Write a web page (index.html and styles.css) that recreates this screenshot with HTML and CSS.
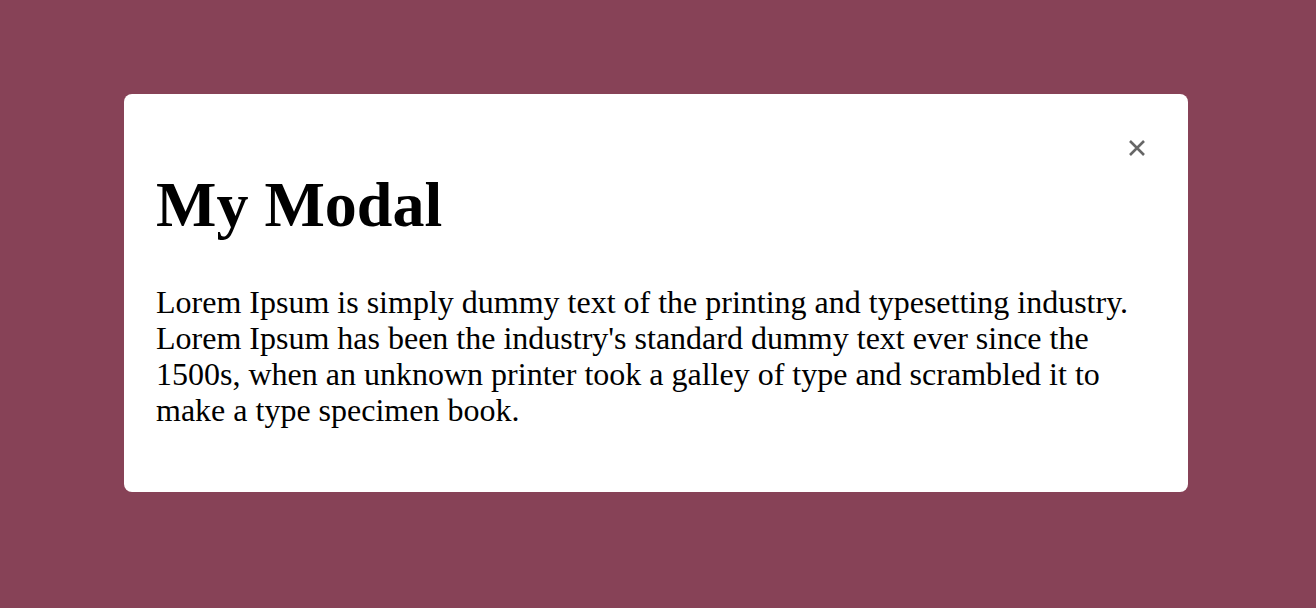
FILE: index.html
```html
<!DOCTYPE html>
<html lang="en">
<head>
    <meta charset="UTF-8">
    <title>My Modal</title>
    <link rel="stylesheet" href="styles.css">
</head>
<body>
    <div class="overlay">
        <div class="modal">
            <button class="close" aria-label="Close">
                <svg width="18" height="18" viewBox="0 0 18 18">
                    <path d="M2 2 L16 16 M16 2 L2 16" stroke="#666" stroke-width="2.6" stroke-linecap="butt"/>
                </svg>
            </button>
            <h1>My Modal</h1>
            <p>Lorem Ipsum is simply dummy text of the printing and typesetting industry. Lorem Ipsum has been the industry's standard dummy text ever since the 1500s, when an unknown printer took a galley of type and scrambled it to make a type specimen book.</p>
        </div>
    </div>
</body>
</html>
```

FILE: styles.css
```css
*{
    box-sizing: border-box;
}
body{
    margin: 0;
    background: #874257;
    font-family: "Liberation Serif", "Times New Roman", serif;
}
.overlay{
    height: 608px;
    padding: 94px 0 0 124px;
}
.modal{
    position: relative;
    width: 1064px;
    padding: 32px;
    background: #fff;
    border-radius: 8px;
    font-size: 32px;
}
.modal h1{
    font-size: 64px;
    line-height: 72px;
    margin: 43px 0;
}
.modal p{
    line-height: 36px;
    margin: 0 0 32px;
}
.close{
    position: absolute;
    top: 45px;
    right: 42px;
    width: 18px;
    height: 18px;
    padding: 0;
    border: 0;
    background: none;
    cursor: pointer;
}
.close svg{
    display: block;
}
```
